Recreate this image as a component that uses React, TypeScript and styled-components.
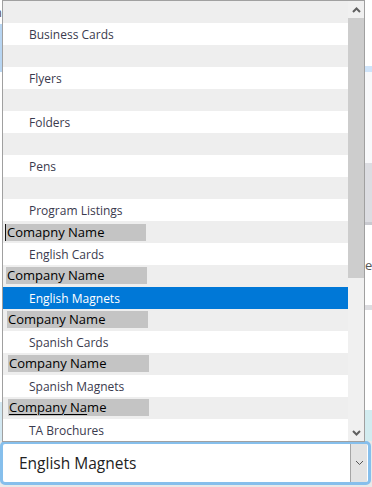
import * as React from 'react';
import styled, { createGlobalStyle } from 'styled-components';

const GlobalStyle = createGlobalStyle`
  html, body {
    margin: 0;
    padding: 0;
    background: #ffffff;
    overflow: hidden;
  }
`;

const Page = styled.div`
  position: relative;
  width: 372px;
  height: 487px;
  overflow: hidden;
  background: #e9e9e9;
  font-family: "Open Sans", "Noto Sans", sans-serif;
`;

// the form behind the open list, only its edges show
const Backdrop = styled.div`
  display: flex;
  flex-direction: column;
  height: 100%;
`;

const EdgeRow = styled.div`
  display: flex;
  justify-content: space-between;
  height: 441px;
`;

const Edge = styled.div<{ $w: number }>`
  display: flex;
  flex-direction: column;
  width: ${p => p.$w}px;
  overflow: hidden;
`;

const Strip = styled.div<{ $h: number; $bg: string }>`
  height: ${p => p.$h}px;
  flex: none;
  background: ${p => p.$bg};
  font-size: 13px;
  line-height: ${p => p.$h}px;
  color: #555;
  white-space: nowrap;
`;

const Peek = styled.span<{ $shift: number }>`
  display: inline-block;
  margin-left: ${p => p.$shift}px;
`;

const SelectBox = styled.div`
  display: flex;
  align-items: stretch;
  width: 371px;
  height: 44px;
  box-sizing: border-box;
  border: 3px solid #86bfec;
  border-radius: 5px;
  background: #ffffff;
`;

const SelectValue = styled.div`
  flex: 1;
  display: flex;
  align-items: center;
  padding-left: 16px;
  font-size: 15.5px;
  color: #222;
`;

const SelectButton = styled.div`
  width: 16px;
  margin: 0 1px 0 0;
  border-left: 1px solid #a5a5a5;
  background: #e3e3e3;
  display: flex;
  align-items: center;
  justify-content: center;
`;

const Popup = styled.div`
  position: absolute;
  left: 2px;
  top: 0;
  width: 363px;
  height: 442px;
  box-sizing: border-box;
  border: 1px solid #a0a0a0;
  background: #ffffff;
  display: flex;
`;

const List = styled.div`
  width: 345px;
  display: flex;
  flex-direction: column;
`;

const Row = styled.div<{ $tone: 'gray' | 'white' | 'selected' }>`
  height: 22px;
  flex: none;
  display: flex;
  align-items: center;
  padding-left: 26px;
  font-size: 12px;
  color: ${p => (p.$tone === 'selected' ? '#ffffff' : '#3a3a4e')};
  background: ${p =>
    p.$tone === 'selected' ? '#0078d7' : p.$tone === 'gray' ? '#eeeeee' : '#ffffff'};
`;

const GroupRow = styled.div`
  height: 22px;
  flex: none;
  background: #eeeeee;
  display: flex;
  align-items: center;
`;

const GroupLabel = styled.div<{ $x: number; $dy: number; $underline?: boolean; $caret?: boolean }>`
  width: 141px;
  height: 17px;
  margin-left: ${p => p.$x}px;
  margin-top: ${p => p.$dy}px;
  background: #c4c4c4;
  font-size: 13px;
  line-height: 17px;
  color: #000;
  padding-left: 1px;
  box-sizing: border-box;
  border-left: ${p => (p.$caret ? '1px solid #111' : 'none')};
  span {
    text-decoration: ${p => (p.$underline ? 'underline' : 'none')};
    text-decoration-thickness: 1px;
    text-underline-offset: 2px;
  }
`;

const Scrollbar = styled.div`
  width: 16px;
  background: #f0f0f0;
  display: flex;
  flex-direction: column;
`;

const ArrowCell = styled.div`
  height: 17px;
  flex: none;
  display: flex;
  align-items: center;
  justify-content: center;
`;

const Thumb = styled.div`
  height: 260px;
  flex: none;
  background: #cdcdcd;
`;

const Track = styled.div`
  flex: 1;
`;

const Chevron = ({ up, weight, color }: { up?: boolean; weight: number; color: string }) => (
  <svg width="9" height="6" viewBox="0 0 9 6">
    <polyline
      points={up ? '1,5 4.5,1.5 8,5' : '1,1 4.5,4.5 8,1'}
      fill="none"
      stroke={color}
      strokeWidth={weight}
    />
  </svg>
);

type Item =
  | { kind: 'blank' }
  | { kind: 'item'; text: string; selected?: boolean }
  | { kind: 'group'; text: string; x: number; dy: number; underline?: boolean; caret?: boolean };

const items: Item[] = [
  { kind: 'blank' },
  { kind: 'item', text: 'Business Cards' },
  { kind: 'blank' },
  { kind: 'item', text: 'Flyers' },
  { kind: 'blank' },
  { kind: 'item', text: 'Folders' },
  { kind: 'blank' },
  { kind: 'item', text: 'Pens' },
  { kind: 'blank' },
  { kind: 'item', text: 'Program Listings' },
  { kind: 'group', text: 'Comapny Name', x: 2, dy: 0, caret: true },
  { kind: 'item', text: 'English Cards' },
  { kind: 'group', text: 'Company Name', x: 3, dy: -1 },
  { kind: 'item', text: 'English Magnets', selected: true },
  { kind: 'group', text: 'Company Name', x: 4, dy: -2 },
  { kind: 'item', text: 'Spanish Cards' },
  { kind: 'group', text: 'Company Name', x: 5, dy: -2 },
  { kind: 'item', text: 'Spanish Magnets' },
  { kind: 'group', text: 'Company Name', x: 5, dy: -2, underline: true },
  { kind: 'item', text: 'TA Brochures' },
];

const renderItems = () =>
  items.map((item, index) => {
    if (item.kind === 'blank') return <Row key={index} $tone="gray" />;
    if (item.kind === 'group')
      return (
        <GroupRow key={index}>
          <GroupLabel $x={item.x} $dy={item.dy} $underline={item.underline} $caret={item.caret}>
            {item.underline ? (
              <>
                <span>Company Na</span>me
              </>
            ) : (
              item.text
            )}
          </GroupLabel>
        </GroupRow>
      );
    return (
      <Row key={index} $tone={item.selected ? 'selected' : 'white'}>
        {item.text}
      </Row>
    );
  });

const App = () => {
  return (
    <Page>
      <GlobalStyle />
      <Backdrop>
        <EdgeRow>
          <Edge $w={2}>
            <Strip $h={24} $bg="#ffffff"><Peek $shift={-6}>n</Peek></Strip>
            <Strip $h={48} $bg="#b7d5f2" />
            <Strip $h={330} $bg="#ffffff" />
            <Strip $h={39} $bg="#d3e8f2" />
          </Edge>
          <Edge $w={7}>
            <Strip $h={66} $bg="#ffffff" />
            <Strip $h={6} $bg="#cfe4fa" />
            <Strip $h={91} $bg="#f8f9fb" />
            <Strip $h={59} $bg="#dcdde2" />
            <Strip $h={3} $bg="#c9cad0" />
            <Strip $h={80} $bg="#ffffff"><Peek $shift={0}>e</Peek></Strip>
            <Strip $h={5} $bg="#dcdce0" />
            <Strip $h={100} $bg="#ffffff" />
            <Strip $h={31} $bg="#d2ecf0" />
          </Edge>
        </EdgeRow>
        <SelectBox>
          <SelectValue>English Magnets</SelectValue>
          <SelectButton>
            <Chevron weight={1} color="#555" />
          </SelectButton>
        </SelectBox>
      </Backdrop>
      <Popup>
        <List>{renderItems()}</List>
        <Scrollbar>
          <ArrowCell>
            <Chevron up weight={2} color="#606060" />
          </ArrowCell>
          <Thumb />
          <Track />
          <ArrowCell>
            <Chevron weight={2} color="#606060" />
          </ArrowCell>
        </Scrollbar>
      </Popup>
    </Page>
  );
};

export default App;
